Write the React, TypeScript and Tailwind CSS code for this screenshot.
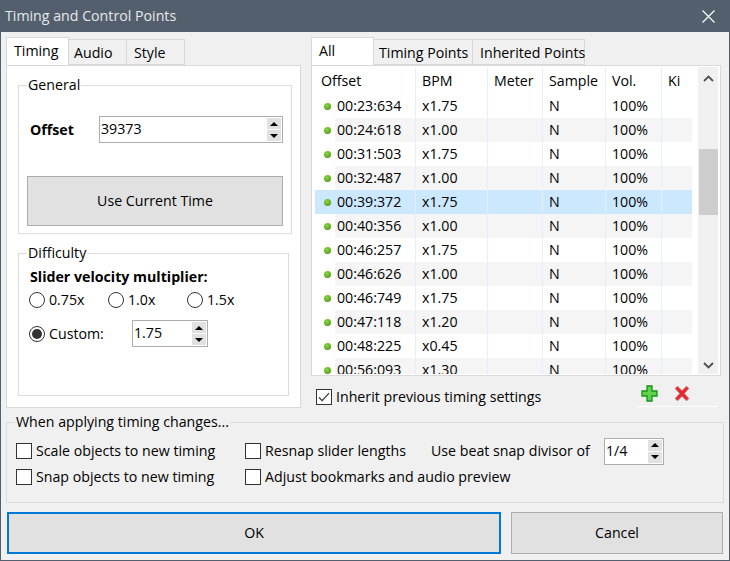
import type { ReactNode } from 'react';

const rows = [
  ['00:23:634', 'x1.75'],
  ['00:24:618', 'x1.00'],
  ['00:31:503', 'x1.75'],
  ['00:32:487', 'x1.00'],
  ['00:39:372', 'x1.75'],
  ['00:40:356', 'x1.00'],
  ['00:46:257', 'x1.75'],
  ['00:46:626', 'x1.00'],
  ['00:46:749', 'x1.75'],
  ['00:47:118', 'x1.20'],
  ['00:48:225', 'x0.45'],
  ['00:56:093', 'x1.30'],
];

function Tab({ label, active, width, pad }: { label: string; active?: boolean; width: string; pad?: string }) {
  if (active) {
    return (
      <div className={`${width} relative z-10 -mb-px h-7 border border-b-0 border-[#d9d9d9] bg-white pl-[7px] pt-[3px]`}>
        {label}
      </div>
    );
  }
  return (
    <div className={`${width} ${pad ?? ''} mt-[2px] h-[26px] whitespace-nowrap border border-l-0 border-[#d9d9d9] bg-[#f0f0f0] pt-[3px]`}>
      {label}
    </div>
  );
}

function Spin({ value, width }: { value: string; width: string }) {
  return (
    <div className={`${width} flex h-[27px] items-center justify-between border border-[#adadad] bg-white pl-[1px] pr-[1px]`}>
      <span className="-mt-[1px]">{value}</span>
      <div className="flex flex-col gap-[1px]">
        <div className="flex h-[11px] w-[14px] items-center justify-center bg-[#e1e1e1]">
          <div className="h-0 w-0 border-x-[4px] border-b-[4px] border-x-transparent border-b-black" />
        </div>
        <div className="flex h-[11px] w-[14px] items-center justify-center bg-[#e1e1e1]">
          <div className="h-0 w-0 border-x-[4px] border-t-[4px] border-x-transparent border-t-black" />
        </div>
      </div>
    </div>
  );
}

function Radio({ label, checked, className }: { label: string; checked?: boolean; className?: string }) {
  return (
    <div className={`flex items-center gap-[4px] ${className ?? ''}`}>
      <div className="flex h-4 w-4 items-center justify-center rounded-full border border-[#333333] bg-white">
        {checked && <div className="h-[10px] w-[10px] rounded-full bg-[#333333]" />}
      </div>
      <span>{label}</span>
    </div>
  );
}

function Check({ label, checked, className }: { label: string; checked?: boolean; className?: string }) {
  return (
    <div className={`flex items-center gap-[4px] ${className ?? ''}`}>
      <div className="flex h-4 w-4 items-center justify-center border border-[#333333] bg-white">
        {checked && (
          <svg width="12" height="12" viewBox="0 0 12 12" fill="none" stroke="#333333" strokeWidth="1.2">
            <path d="M1 6.5l3.2 3.2L11 2.2" />
          </svg>
        )}
      </div>
      <span>{label}</span>
    </div>
  );
}

function Group({ title, className, children }: { title: string; className: string; children: ReactNode }) {
  return (
    <fieldset className={`${className} border border-[#dcdcdc]`}>
      <legend className="ml-[8px] px-[1px] leading-[20px]">{title}</legend>
      {children}
    </fieldset>
  );
}

function Cell({ className, children }: { className: string; children?: ReactNode }) {
  return <div className={`${className} flex h-full shrink-0 items-center border-r border-[#e6eefa] pl-[6px]`}>{children}</div>;
}

export default function App() {
  return (
    <div className="flex h-[561px] w-[730px] flex-col border-x border-b border-[#535f6d] bg-[#f0f0f0] text-[14.2px] leading-[20px] text-black [font-family:'Open_Sans','Noto_Sans',sans-serif]">
      <div className="-mx-px flex h-8 shrink-0 items-center justify-between bg-[#535f6d] pl-[5px] pr-[15px] text-[#e6e8ea]">
        <span>Timing and Control Points</span>
        <svg width="13" height="13" viewBox="0 0 13 13" stroke="#ffffff" strokeWidth="1.2">
          <path d="M0.5 0.5l12 12M12.5 0.5l-12 12" />
        </svg>
      </div>

      <div className="flex gap-[10px] pl-[5px] pt-[5px]">
        <div className="w-[295px]">
          <div className="flex">
            <Tab label="Timing" active width="w-[63px]" />
            <Tab label="Audio" width="w-[58px]" pad="pl-[5px]" />
            <Tab label="Style" width="w-[58px]" pad="pl-[7px]" />
          </div>
          <div className="h-[343px] border border-[#d9d9d9] bg-white px-[11px] pt-[9px]">
            <Group title="General" className="h-[159px]">
              <div className="px-[8px]">
                <div className="mt-[21px] flex items-center">
                  <b className="ml-[3px] w-[69px] font-bold">Offset</b>
                  <Spin value="39373" width="w-[184px]" />
                </div>
                <div className="mt-[33px] flex h-[50px] w-[256px] items-center justify-center border border-[#adadad] bg-[#e1e1e1]">
                  Use Current Time
                </div>
              </div>
            </Group>
            <Group title="Difficulty" className="mt-[9px] h-[153px]">
              <div className="px-[10px]">
                <b className="ml-[1px] mt-[4px] block font-bold">Slider velocity multiplier:</b>
                <div className="mt-[3px] flex">
                  <Radio label="0.75x" className="w-[79px]" />
                  <Radio label="1.0x" className="w-[79px]" />
                  <Radio label="1.5x" />
                </div>
                <div className="mt-[10px] flex items-center">
                  <Radio label="Custom:" checked className="w-[103px]" />
                  <Spin value="1.75" width="w-[76px]" />
                </div>
              </div>
            </Group>
          </div>
        </div>

        <div className="w-[410px]">
          <div className="flex">
            <Tab label="All" active width="w-[63px]" />
            <Tab label="Timing Points" width="w-[99px]" pad="pl-[5px]" />
            <Tab label="Inherited Points" width="w-[112px]" pad="pl-[7px]" />
          </div>
          <div className="relative flex h-[311px] border border-[#d9d9d9] bg-white py-[1px] pl-[3px] pr-[2px]">
            <div className="h-[307px] w-[378px] overflow-hidden">
              <div className="flex h-[27px] items-center">
                <Cell className="w-[101px]">Offset</Cell>
                <Cell className="w-[72px]">BPM</Cell>
                <Cell className="w-[55px]">Meter</Cell>
                <Cell className="w-[63px]">Sample</Cell>
                <Cell className="w-[56px]">Vol.</Cell>
                <Cell className="w-[31px]">Ki</Cell>
              </div>
              {rows.map(([offset, bpm], i) => (
                <div
                  key={offset}
                  className={`flex h-6 items-center ${i === 4 ? 'bg-[#cce8ff]' : ''}`}
                >
                  <div className="flex h-full w-5 shrink-0 items-center pl-[9px]">
                    <div className="h-[7px] w-[7px] rounded-full bg-[radial-gradient(circle_at_40%_35%,#8fd43f,#3f8f10)]" />
                  </div>
                  <div className={`flex h-full flex-1 items-center ${i % 2 === 1 ? 'bg-[#f5f5f5]' : ''}`}>
                    <Cell className="w-[81px] !pl-[2px]">{offset}</Cell>
                    <Cell className="w-[72px]">{bpm}</Cell>
                    <Cell className="w-[55px]" />
                    <Cell className="w-[63px]">N</Cell>
                    <Cell className="w-[56px]">100%</Cell>
                    <Cell className="w-[31px]" />
                  </div>
                </div>
              ))}
            </div>
            <div className="ml-[6px] flex w-[20px] flex-col justify-between bg-[#f0f0f0] pb-[5px] pt-[8px]">
              <svg className="mx-auto" width="11" height="7" viewBox="0 0 11 7" fill="none" stroke="#505050" strokeWidth="1.8">
                <path d="M1 6l4.5-4.5L10 6" />
              </svg>
              <svg className="mx-auto" width="11" height="7" viewBox="0 0 11 7" fill="none" stroke="#505050" strokeWidth="1.8">
                <path d="M1 1l4.5 4.5L10 1" />
              </svg>
            </div>
            <div className="absolute left-[387px] top-[83px] h-[66px] w-[19px] bg-[#cdcdcd]" />
          </div>
          <div className="flex">
            <Check label="Inherit previous timing settings" checked className="ml-[5px] mt-[11px] h-5" />
            <div className="ml-auto mr-[4px] mt-[9px] w-[80px] border-b border-white pb-[3px] pl-[4px]">
              <div className="flex gap-[15px]">
                <svg width="17" height="17" viewBox="0 0 17 17">
                  <path d="M6 1h5v5h5v5h-5v5H6v-5H1V6h5z" fill="#5fd34a" stroke="#15921a" strokeWidth="1.3" />
                </svg>
                <svg width="18" height="17" viewBox="0 0 18 17">
                  <path d="M2 3.5L4.5 1 9 5.500 13.500 1 16 3.500 11.500 8.500 16 13.500 13.500 16 9 11.500 4.500 16 2 13.500 6.500 8.500z" fill="#e8282c" stroke="#b9b0b0" strokeWidth="0.8" />
                </svg>
              </div>
            </div>
          </div>
        </div>
      </div>

      <Group title="When applying timing changes..." className="ml-[5px] mt-[4px] h-[91px] w-[718px]">
        <div className="pl-[9px]">
          <div className="mt-[6px] flex h-[26px] items-center">
            <Check label="Scale objects to new timing" className="w-[229px]" />
            <Check label="Resnap slider lengths" className="w-[186px]" />
            <span className="w-[173px]">Use beat snap divisor of</span>
            <Spin value="1/4" width="w-[60px]" />
          </div>
          <div className="flex h-[26px] items-center">
            <Check label="Snap objects to new timing" className="w-[229px]" />
            <Check label="Adjust bookmarks and audio preview" />
          </div>
        </div>
      </Group>

      <div className="ml-[6px] mt-[9px] flex gap-[10px]">
        <div className="flex h-[42px] w-[494px] items-center justify-center border-2 border-[#0078d7] bg-[#e1e1e1]">OK</div>
        <div className="flex h-[42px] w-[212px] items-center justify-center border border-[#adadad] bg-[#e1e1e1]">Cancel</div>
      </div>
    </div>
  );
}
